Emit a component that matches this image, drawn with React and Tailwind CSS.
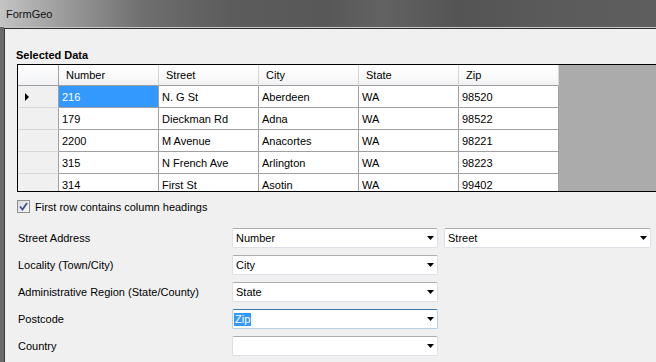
import React from "react";

const rows = [
  ["216", "N. G St", "Aberdeen", "WA", "98520"],
  ["179", "Dieckman Rd", "Adna", "WA", "98522"],
  ["2200", "M Avenue", "Anacortes", "WA", "98221"],
  ["315", "N French Ave", "Arlington", "WA", "98223"],
  ["314", "First St", "Asotin", "WA", "99402"],
];
const heads = ["Number", "Street", "City", "State", "Zip"];

function Arrow() {
  return (
    <svg width="7" height="4" viewBox="0 0 7 4" className="shrink-0">
      <polygon points="0,0 7,0 3.5,4" fill="#000" />
    </svg>
  );
}

function Combo({ value, w, focused, selected }) {
  return (
    <div
      className={
        "h-[20px] flex items-center bg-white rounded-[2px] border " +
        (focused
          ? "border-[#b5cfe7] border-t-[#3d7bad]"
          : "border-[#dde1e7] border-t-[#abadb3]") +
        " " +
        w
      }
    >
      <div className="flex-1 pl-px min-w-0">
        {selected ? (
          <span className="inline-block bg-[#3399ff] text-white leading-[13px] px-[1px]">{value}</span>
        ) : (
          <span className="pl-[2px] leading-[14px]">{value}</span>
        )}
      </div>
      <div className="mr-[3px] flex items-center">
        <Arrow />
      </div>
    </div>
  );
}

export default function App() {
  return (
    <div className="w-[656px] h-[362px] overflow-hidden flex flex-col font-['Liberation_Sans',Arial,sans-serif] text-[11px] text-black bg-[#f0f0f0]">
      <div className="h-[27px] shrink-0 flex items-center pl-[6px] bg-[linear-gradient(to_right,#c4c4c4_0%,#9a9a9a_10%,#6e6e6e_22%,#5c5c5c_35%,#585858_50%,#626262_58%,#545454_70%,#5b5b5b_85%,#5e5e5e_100%)]">
        <span className="text-[11px] leading-[14px] text-[#111]">FormGeo</span>
      </div>
      <div className="flex-1 flex min-h-0">
        <div className="w-[4px] bg-[#6a6a6a] shrink-0" />
        <div className="flex-1 flex flex-col min-w-0">
          <div className="h-px bg-[#c8c8c8] shrink-0" />
          <div className="h-px bg-[#2e2e2e] shrink-0" />
          <div className="flex-1 bg-[#f0f0f0] border-l border-[#3a3a3a] pl-[12px] flex flex-col min-h-0">
            <div className="h-[35px] shrink-0 flex items-end">
              <span className="-ml-px font-bold leading-[14px] pb-[2px] whitespace-nowrap">Selected Data</span>
            </div>
            <div className="h-[128px] shrink-0 border-l border-t border-b border-black flex overflow-hidden">
              <div className="flex flex-col shrink-0">
                <div className="flex h-[21px] shrink-0">
                  <div className="w-[41px] h-[21px] border-r border-b border-[#a0a0a0] bg-[linear-gradient(to_bottom,#ffffff,#f1f2f4)]" />
                  {heads.map((h) => (
                    <div
                      key={h}
                      className="w-[100px] h-[21px] border-r border-b border-r-[#d5d5d5] border-b-[#a0a0a0] bg-[linear-gradient(to_bottom,#ffffff_0%,#fafafa_60%,#eff0f2_100%)] flex items-center pl-[7px] leading-[14px]"
                    >
                      {h}
                    </div>
                  ))}
                </div>
                {rows.map((r, i) => (
                  <div key={i} className="flex h-[22px] shrink-0">
                    <div className="w-[41px] h-[22px] border-r border-b border-r-[#a0a0a0] border-b-[#d8d8d8] bg-[#f0f0f0] flex items-center pl-[7px]">
                      {i === 0 && (
                        <svg width="4" height="8" viewBox="0 0 4 8">
                          <polygon points="0,0 4,4 0,8" fill="#000" />
                        </svg>
                      )}
                    </div>
                    {r.map((c, j) => (
                      <div
                        key={j}
                        className={
                          "w-[100px] h-[22px] border-r border-b border-[#a0a0a0] flex items-center pl-[3px] leading-[14px] " +
                          (i === 0 && j === 0 ? "bg-[#3399ff] text-white" : "bg-white")
                        }
                      >
                        {c}
                      </div>
                    ))}
                  </div>
                ))}
              </div>
              <div className="flex-1 bg-[#ababab]" />
            </div>
            <div className="mt-[8px] h-[13px] flex items-center gap-[5px] shrink-0">
              <div className="w-[13px] h-[13px] border border-[#8e8f8f] bg-[linear-gradient(135deg,#dcdcdc,#f7f7f7)] flex items-center justify-center">
                <svg width="9" height="9" viewBox="0 0 9 9">
                  <path d="M1 4.5 L3.5 7.5 L8 1" fill="none" stroke="#3b4f8c" strokeWidth="1.7" />
                </svg>
              </div>
              <span className="leading-[14px]">First row contains column headings</span>
            </div>
            <div className="mt-[15px] flex flex-col gap-[7px]">
              <div className="flex items-center">
                <div className="w-[215px] pl-px leading-[14px]">Street Address</div>
                <Combo value="Number" w="w-[206px]" />
                <div className="w-[6px]" />
                <Combo value="Street" w="w-[207px]" />
              </div>
              <div className="flex items-center">
                <div className="w-[215px] pl-px leading-[14px]">Locality (Town/City)</div>
                <Combo value="City" w="w-[206px]" />
              </div>
              <div className="flex items-center">
                <div className="w-[215px] pl-px leading-[14px]">Administrative Region (State/County)</div>
                <Combo value="State" w="w-[206px]" />
              </div>
              <div className="flex items-center">
                <div className="w-[215px] pl-px leading-[14px]">Postcode</div>
                <Combo value="Zip" w="w-[206px]" focused selected />
              </div>
              <div className="flex items-center">
                <div className="w-[215px] pl-px leading-[14px]">Country</div>
                <Combo value="" w="w-[206px]" />
              </div>
            </div>
          </div>
        </div>
      </div>
    </div>
  );
}
